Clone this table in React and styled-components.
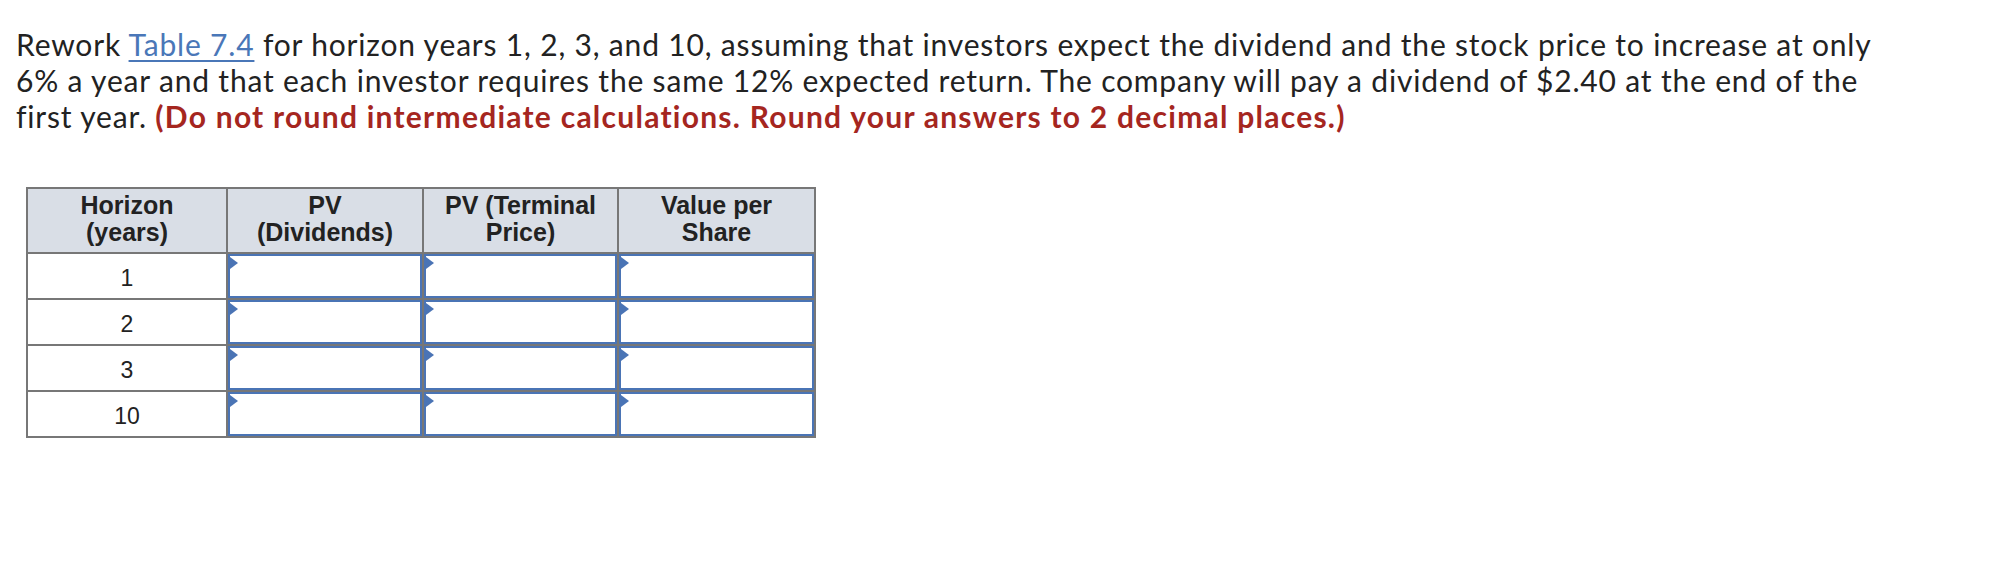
import React from 'react';
import styled, { createGlobalStyle } from 'styled-components';

const rows = ['1', '2', '3', '10'];
const columns = [
  { label: ['Horizon', '(years)'], width: 200 },
  { label: ['PV', '(Dividends)'], width: 196 },
  { label: ['PV (Terminal', 'Price)'], width: 195 },
  { label: ['Value per', 'Share'], width: 197 },
];

const GlobalStyle = createGlobalStyle`
  body {
    margin: 0;
    background: #fff;
  }
`;

const Page = styled.div`
  padding: 26px 16px 0 16px;
`;

const Prompt = styled.p`
  margin: 0;
  max-width: 1960px;
  font-family: Lato, "Open Sans", sans-serif;
  font-size: 30px;
  line-height: 36px;
  letter-spacing: 0.82px;
  color: #222;

  a {
    color: #4a77b8;
    text-decoration: underline;
    text-underline-offset: 4px;
    text-decoration-thickness: 1.5px;
  }
`;

const Warning = styled.strong`
  color: #a5261f;
  font-weight: 700;
  letter-spacing: 1.25px;
`;

const Table = styled.table`
  margin: 53px 0 0 10px;
  border-collapse: collapse;
  border: 2px solid #777;
  font-family: "Liberation Sans", Arial, sans-serif;
  color: #222;
`;

const HeadCell = styled.th`
  border: 2px solid #777;
  background: #d9dee6;
  font-size: 25px;
  font-weight: 700;
  line-height: 27px;
  padding: 3px 4px 6px;
  text-align: center;
  vertical-align: middle;
`;

const YearCell = styled.td`
  border: 2px solid #777;
  height: 44px;
  padding: 4px 0 0;
  text-align: center;
  font-size: 23px;
  box-sizing: border-box;
`;

const InputCell = styled.td`
  border: 2px solid #777;
  padding: 0;
  height: 44px;
`;

const InputBox = styled.div`
  position: relative;
  height: 44px;
  box-sizing: border-box;
  border: 2px solid #4a74b5;

  &::before {
    content: '';
    position: absolute;
    left: 0;
    top: 1px;
    border-top: 6px solid transparent;
    border-bottom: 6px solid transparent;
    border-left: 8px solid #4a74b5;
  }
`;

const App = () => (
  <Page>
    <GlobalStyle />
    <Prompt>
      Rework <a href="#">Table 7.4</a> for horizon years 1, 2, 3, and 10, assuming that investors
      expect the dividend and the stock price to increase at only<br />
      6% a year and that each investor requires the same 12% expected return. The company will pay
      a dividend of $2.40 at the end of the<br />
      first year. <Warning>(Do not round intermediate calculations. Round your answers to 2 decimal places.)</Warning>
    </Prompt>
    <Table>
      <colgroup>
        {columns.map(col => <col key={col.label.join()} style={{ width: col.width }} />)}
      </colgroup>
      <thead>
        <tr>
          {columns.map(col => (
            <HeadCell key={col.label.join()}>
              {col.label[0]}<br />{col.label[1]}
            </HeadCell>
          ))}
        </tr>
      </thead>
      <tbody>
        {rows.map(year => (
          <tr key={year}>
            <YearCell>{year}</YearCell>
            {[1, 2, 3].map(i => (
              <InputCell key={i}><InputBox /></InputCell>
            ))}
          </tr>
        ))}
      </tbody>
    </Table>
  </Page>
);

export default App;
